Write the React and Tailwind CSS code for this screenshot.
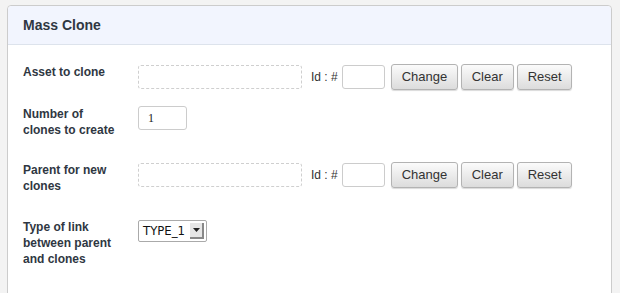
const BTN =
  'h-[26px] px-[10px] rounded-[3px] border border-[#b3b3b3] bg-gradient-to-b from-[#fbfbfb] to-[#dcdcdc] text-[13px] text-[#333] shadow-[0_1px_1px_rgba(0,0,0,0.15)]'

function PickerRow({ label, top }) {
  return (
    <div className={`flex items-start ${top}`}>
      <div className="w-[115px] shrink-0 text-[12px] leading-[16px] font-bold text-[#2f3742]">
        {label}
      </div>
      <div className="flex items-center h-[26px]">
        <div className="w-[164px] h-[24px] border border-dashed border-[#cfcfcf] rounded-[3px] bg-white" />
        <span className="ml-[9px] text-[12px] text-[#333]">Id : #</span>
        <input className="ml-[4px] w-[43px] h-[24px] border border-[#ccc] rounded-[3px] bg-white" />
        <button className={`ml-[6px] w-[67px] ${BTN}`}>Change</button>
        <button className={`ml-[3px] w-[53px] ${BTN}`}>Clear</button>
        <button className={`ml-[3px] w-[55px] ${BTN}`}>Reset</button>
      </div>
    </div>
  )
}

export default function App() {
  return (
    <div className="min-h-[293px] h-[293px] overflow-hidden bg-[#f3f3f3] pt-[5px] pl-[7px] pr-[8px] font-['Liberation_Sans',Arial,sans-serif]">
      <div className="border border-[#cccccc] rounded-[4px] bg-white h-[320px]">
        {/* header */}
        <div className="h-[39px] bg-[#f2f5fe] border-b border-[#dde3ec] rounded-t-[4px] flex items-center pl-[15px]">
          <h2 className="text-[14px] font-bold text-[#2f3742]">Mass Clone</h2>
        </div>

        <div className="pl-[15px] pt-[19px]">
          <PickerRow label="Asset to clone" top="" />

          <div className="flex items-start mt-[16px]">
            <div className="w-[115px] shrink-0 text-[12px] leading-[16px] font-bold text-[#2f3742]">
              Number of<br />clones to create
            </div>
            <input
              defaultValue="1"
              className="w-[49px] h-[24px] border border-[#ccc] rounded-[3px] bg-white pl-[9px] text-[12px] text-[#222] font-['Liberation_Serif',serif]"
            />
          </div>

          <PickerRow
            label={<>Parent for new<br />clones</>}
            top="mt-[24px]"
          />

          <div className="flex items-start mt-[25px]">
            <div className="w-[115px] shrink-0 text-[12px] leading-[16px] font-bold text-[#2f3742]">
              Type of link<br />between parent<br />and clones
            </div>
            <div className="mt-[1px] w-[69px] h-[22px] border border-[#aaa] rounded-[2px] bg-white flex items-center justify-between pl-[4px] pr-[2px]">
              <span className="text-[13px] text-[#111] font-['DejaVu_Sans_Condensed','DejaVu_Sans',sans-serif]">TYPE_1</span>
              <span className="w-[14px] h-[16px] bg-[#e6e6e6] border-r-2 border-b-2 border-[#888] flex items-center justify-center">
                <svg width="7" height="4" viewBox="0 0 7 4">
                  <polygon points="0,0 7,0 3.5,4" fill="#222" />
                </svg>
              </span>
            </div>
          </div>
        </div>
      </div>
    </div>
  )
}
